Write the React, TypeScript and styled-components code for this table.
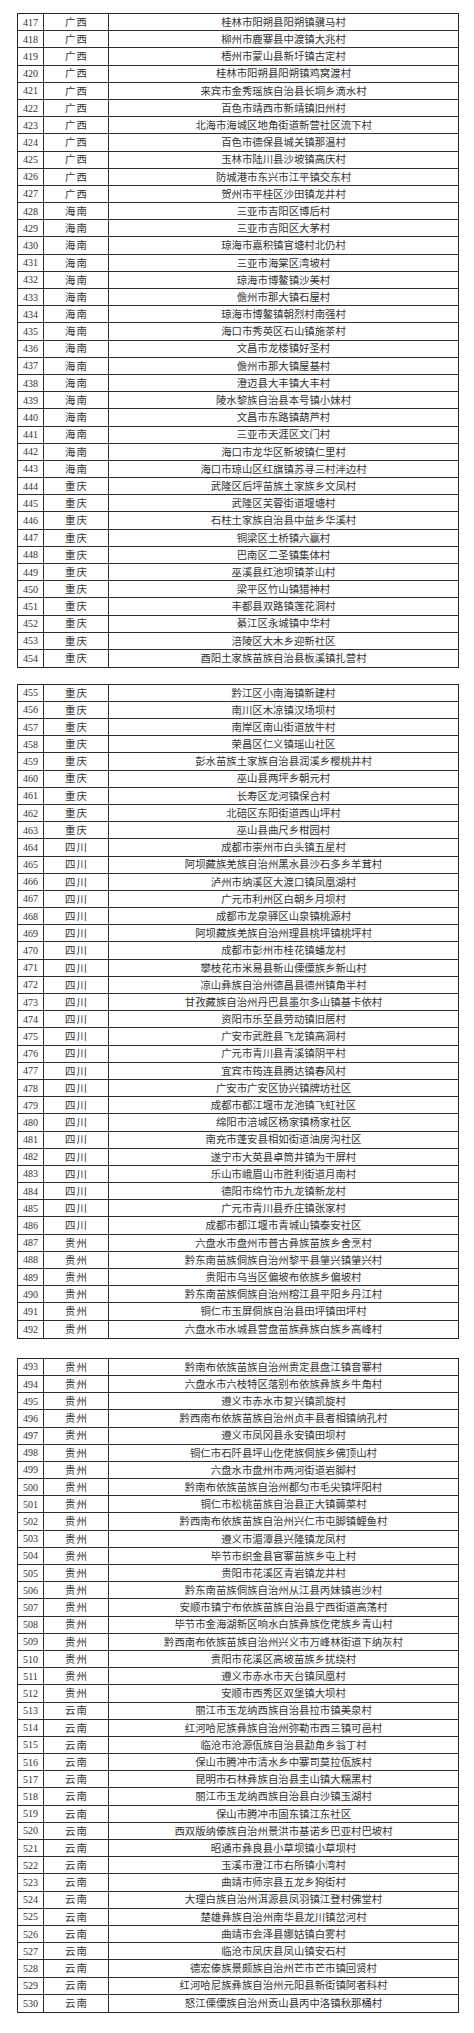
import React from "react";
import styled, { createGlobalStyle } from "styled-components";

const Global = createGlobalStyle`
  html, body { margin: 0; padding: 0; background: #ffffff; }
  body { width: 474px; min-height: 2033px; }
`;

type Group = { province: string; names: string[] };

const sections: { start: number; gap: number; groups: Group[] }[] = [
  {
    start: 417,
    gap: 13,
    groups: [
      {
        province: "广西",
        names: [
          "桂林市阳朔县阳朔镇骥马村",
          "柳州市鹿寨县中渡镇大兆村",
          "梧州市蒙山县新圩镇古定村",
          "桂林市阳朔县阳朔镇鸡窝渡村",
          "来宾市金秀瑶族自治县长垌乡滴水村",
          "百色市靖西市新靖镇旧州村",
          "北海市海城区地角街道新营社区流下村",
          "百色市德保县城关镇那温村",
          "玉林市陆川县沙坡镇高庆村",
          "防城港市东兴市江平镇交东村",
          "贺州市平桂区沙田镇龙井村",
        ],
      },
      {
        province: "海南",
        names: [
          "三亚市吉阳区博后村",
          "三亚市吉阳区大茅村",
          "琼海市嘉积镇官塘村北仍村",
          "三亚市海棠区湾坡村",
          "琼海市博鳌镇沙美村",
          "儋州市那大镇石屋村",
          "琼海市博鳌镇朝烈村南强村",
          "海口市秀英区石山镇施茶村",
          "文昌市龙楼镇好圣村",
          "儋州市那大镇屋基村",
          "澄迈县大丰镇大丰村",
          "陵水黎族自治县本号镇小妹村",
          "文昌市东路镇葫芦村",
          "三亚市天涯区文门村",
          "海口市龙华区新坡镇仁里村",
          "海口市琼山区红旗镇苏寻三村泮边村",
        ],
      },
      {
        province: "重庆",
        names: [
          "武隆区后坪苗族土家族乡文凤村",
          "武隆区芙蓉街道堰塘村",
          "石柱土家族自治县中益乡华溪村",
          "铜梁区土桥镇六赢村",
          "巴南区二圣镇集体村",
          "巫溪县红池坝镇茶山村",
          "梁平区竹山镇猎神村",
          "丰都县双路镇莲花洞村",
          "綦江区永城镇中华村",
          "涪陵区大木乡迎新社区",
          "酉阳土家族苗族自治县板溪镇扎营村",
        ],
      },
    ],
  },
  {
    start: 455,
    gap: 15.5,
    groups: [
      {
        province: "重庆",
        names: [
          "黔江区小南海镇新建村",
          "南川区木凉镇汉场坝村",
          "南岸区南山街道放牛村",
          "荣昌区仁义镇瑶山社区",
          "彭水苗族土家族自治县润溪乡樱桃井村",
          "巫山县两坪乡朝元村",
          "长寿区龙河镇保合村",
          "北碚区东阳街道西山坪村",
          "巫山县曲尺乡柑园村",
        ],
      },
      {
        province: "四川",
        names: [
          "成都市崇州市白头镇五星村",
          "阿坝藏族羌族自治州黑水县沙石多乡羊茸村",
          "泸州市纳溪区大渡口镇凤凰湖村",
          "广元市利州区白朝乡月坝村",
          "成都市龙泉驿区山泉镇桃源村",
          "阿坝藏族羌族自治州理县桃坪镇桃坪村",
          "成都市彭州市桂花镇蟠龙村",
          "攀枝花市米易县新山傈僳族乡新山村",
          "凉山彝族自治州德昌县德州镇角半村",
          "甘孜藏族自治州丹巴县墨尔多山镇基卡依村",
          "资阳市乐至县劳动镇旧居村",
          "广安市武胜县飞龙镇高洞村",
          "广元市青川县青溪镇阴平村",
          "宜宾市筠连县腾达镇春风村",
          "广安市广安区协兴镇牌坊社区",
          "成都市都江堰市龙池镇飞虹社区",
          "绵阳市涪城区杨家镇杨家社区",
          "南充市蓬安县相如街道油房沟社区",
          "遂宁市大英县卓筒井镇为干屏村",
          "乐山市峨眉山市胜利街道月南村",
          "德阳市绵竹市九龙镇新龙村",
          "广元市青川县乔庄镇张家村",
          "成都市都江堰市青城山镇泰安社区",
        ],
      },
      {
        province: "贵州",
        names: [
          "六盘水市盘州市普古彝族苗族乡舍烹村",
          "黔东南苗族侗族自治州黎平县肇兴镇肇兴村",
          "贵阳市乌当区偏坡布依族乡偏坡村",
          "黔东南苗族侗族自治州榕江县平阳乡丹江村",
          "铜仁市玉屏侗族自治县田坪镇田坪村",
          "六盘水市水城县营盘苗族彝族白族乡高峰村",
        ],
      },
    ],
  },
  {
    start: 493,
    gap: 19,
    groups: [
      {
        province: "贵州",
        names: [
          "黔南布依族苗族自治州贵定县盘江镇音寨村",
          "六盘水市六枝特区落别布依族彝族乡牛角村",
          "遵义市赤水市复兴镇凯旋村",
          "黔西南布依族苗族自治州贞丰县者相镇纳孔村",
          "遵义市凤冈县永安镇田坝村",
          "铜仁市石阡县坪山仡佬族侗族乡佛顶山村",
          "六盘水市盘州市两河街道岩脚村",
          "黔南布依族苗族自治州都匀市毛尖镇坪阳村",
          "铜仁市松桃苗族自治县正大镇薅菜村",
          "黔西南布依族苗族自治州兴仁市屯脚镇鲤鱼村",
          "遵义市湄潭县兴隆镇龙凤村",
          "毕节市织金县官寨苗族乡屯上村",
          "贵阳市花溪区青岩镇龙井村",
          "黔东南苗族侗族自治州从江县丙妹镇岜沙村",
          "安顺市镇宁布依族苗族自治县宁西街道高荡村",
          "毕节市金海湖新区响水白族彝族仡佬族乡青山村",
          "黔西南布依族苗族自治州兴义市万峰林街道下纳灰村",
          "贵阳市花溪区高坡苗族乡扰绕村",
          "遵义市赤水市天台镇凤凰村",
          "安顺市西秀区双堡镇大坝村",
        ],
      },
      {
        province: "云南",
        names: [
          "丽江市玉龙纳西族自治县拉市镇美泉村",
          "红河哈尼族彝族自治州弥勒市西三镇可邑村",
          "临沧市沧源佤族自治县勐角乡翁丁村",
          "保山市腾冲市清水乡中寨司莫拉佤族村",
          "昆明市石林彝族自治县圭山镇大糯黑村",
          "丽江市玉龙纳西族自治县白沙镇玉湖村",
          "保山市腾冲市固东镇江东社区",
          "西双版纳傣族自治州景洪市基诺乡巴亚村巴坡村",
          "昭通市彝良县小草坝镇小草坝村",
          "玉溪市澄江市右所镇小湾村",
          "曲靖市师宗县五龙乡狗街村",
          "大理白族自治州洱源县凤羽镇江登村佛堂村",
          "楚雄彝族自治州南华县龙川镇岔河村",
          "曲靖市会泽县娜姑镇白雾村",
          "临沧市凤庆县凤山镇安石村",
          "德宏傣族景颇族自治州芒市芒市镇回贤村",
          "红河哈尼族彝族自治州元阳县新街镇阿者科村",
          "怒江傈僳族自治州贡山县丙中洛镇秋那桶村",
        ],
      },
    ],
  },
];

const Page = styled.main`
  display: flex;
  flex-direction: column;
  width: 474px;
  padding-bottom: 20px;
  background: #ffffff;
`;

const Sheet = styled.section<{ $gap: number }>`
  margin: ${(p) => p.$gap}px 0 0 17px;
  width: 440px;
  border: 1px solid #262626;
  display: flex;
  flex-direction: column;
`;

const Row = styled.div`
  display: grid;
  grid-template-columns: 26px 65px 1fr;
  height: 17.2px;
  box-sizing: border-box;
  border-bottom: 1px solid #2e2e2e;
  &:last-child {
    border-bottom: none;
  }
`;

const Cell = styled.div<{ $kind: "num" | "prov" | "name" }>`
  display: flex;
  align-items: center;
  justify-content: center;
  overflow: hidden;
  white-space: nowrap;
  color: #333333;
  border-right: ${(p) => (p.$kind === "name" ? "none" : "1px solid #2e2e2e")};
  font-family: ${(p) =>
    p.$kind === "num"
      ? '"Liberation Serif", "DejaVu Serif", serif'
      : '"Noto Sans CJK SC", "Noto Sans", sans-serif'};
  font-size: ${(p) => (p.$kind === "num" ? "10px" : "10.4px")};
  letter-spacing: ${(p) => (p.$kind === "prov" ? "1px" : "0")};
  padding-left: ${(p) => (p.$kind === "prov" ? "1px" : "0")};
  line-height: 1;
  padding-top: ${(p) => (p.$kind === "num" ? "1px" : "0")};
`;

export default function App() {
  return (
    <>
      <Global />
      <Page>
        {sections.map((sec) => {
          let n = sec.start;
          const rows: { num: number; prov: string; name: string }[] = [];
          sec.groups.forEach((g) =>
            g.names.forEach((name) => rows.push({ num: n++, prov: g.province, name }))
          );
          return (
            <Sheet key={sec.start} $gap={sec.gap}>
              {rows.map((r) => (
                <Row key={r.num}>
                  <Cell $kind="num">{r.num}</Cell>
                  <Cell $kind="prov">{r.prov}</Cell>
                  <Cell $kind="name">{r.name}</Cell>
                </Row>
              ))}
            </Sheet>
          );
        })}
      </Page>
    </>
  );
}
